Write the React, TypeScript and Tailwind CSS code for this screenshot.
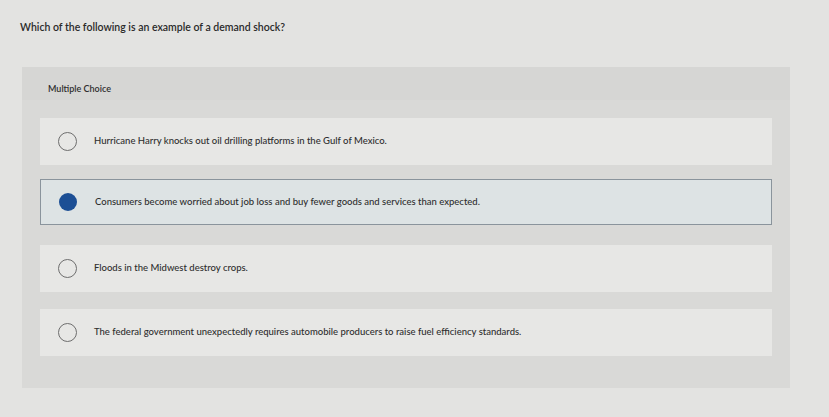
const options = [
  "Hurricane Harry knocks out oil drilling platforms in the Gulf of Mexico.",
  "Consumers become worried about job loss and buy fewer goods and services than expected.",
  "Floods in the Midwest destroy crops.",
  "The federal government unexpectedly requires automobile producers to raise fuel efficiency standards.",
];

const selected = 1;

export default function App() {
  return (
    <div
      className="w-[829px] h-[417px] overflow-hidden bg-[#e3e3e1] text-[#2e2e2e]"
      style={{ fontFamily: "Lato, 'Open Sans', sans-serif" }}
    >
      <div className="pt-[20px] pl-[20px] text-[10.5px] leading-[14px] font-semibold text-[#2a2a2a]">
        Which of the following is an example of a demand shock?
      </div>

      {/* question panel */}
      <div className="mt-[33px] ml-[22px] w-[768px] bg-[#d9d9d7] pb-[32px]">
        <div className="h-[33px] pt-[16px] pl-[26px] text-[9px] leading-[11px] font-semibold bg-[#d6d6d4]">
          Multiple Choice
        </div>
        <div className="flex flex-col gap-[17px] pt-[18px] px-[18px]">
          {options.map((text, i) => (
            <div
              key={i}
              className={
                i === selected
                  ? "h-[46px] flex items-center border border-[#8a949c] bg-[#dde3e4] -mt-[3px] mb-[3px]"
                  : "h-[47px] flex items-center bg-[#e7e7e5]"
              }
            >
              <div className="w-[54px] flex justify-center">
                {i === selected ? (
                  <div className="w-[18px] h-[18px] rounded-full bg-[#1c4f95]" />
                ) : (
                  <div className="w-[19px] h-[19px] rounded-full border-[1.5px] border-[#6e6e6e]" />
                )}
              </div>
              <div className="text-[9.5px] font-medium">{text}</div>
            </div>
          ))}
        </div>
      </div>
    </div>
  );
}
